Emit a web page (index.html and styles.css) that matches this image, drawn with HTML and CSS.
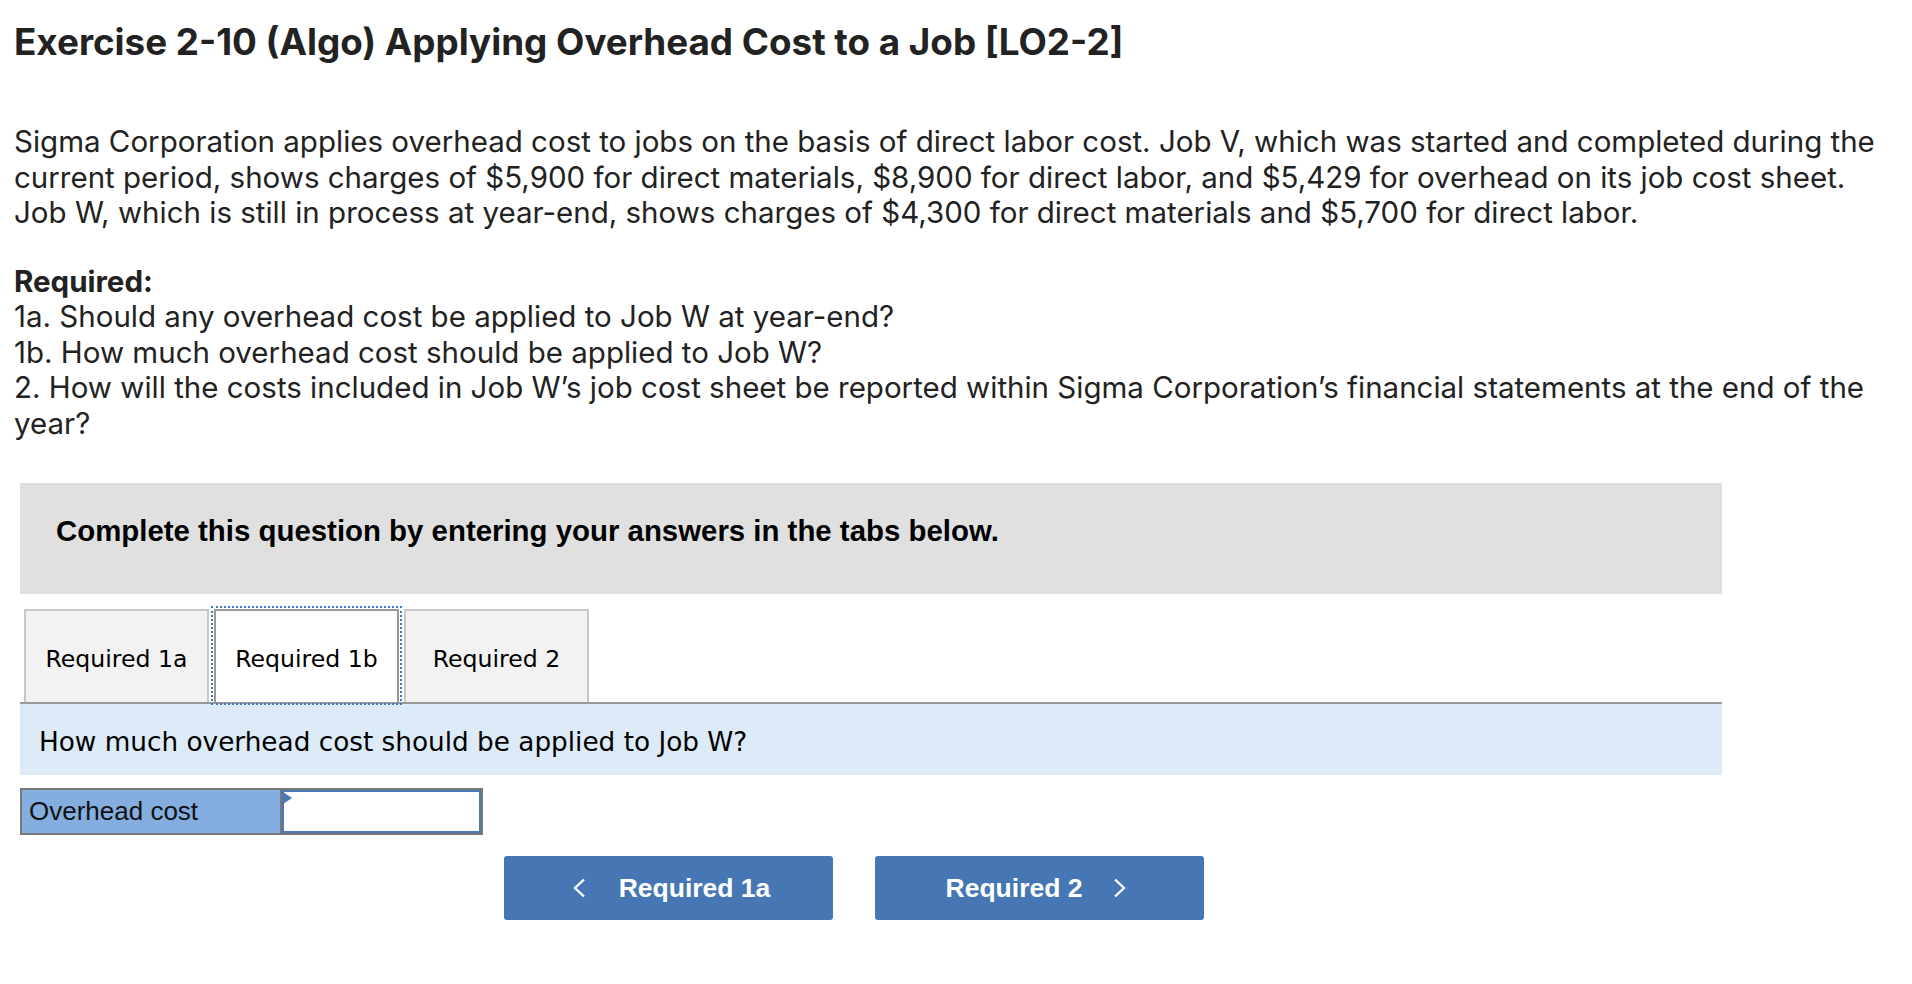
FILE: index.html
```html
<!DOCTYPE html>
<html>
<head>
<meta charset="utf-8">
<link rel="stylesheet" href="styles.css">
</head>
<body>
<div class="intro">
  <h1 class="title">Exercise 2-10 (Algo) Applying Overhead Cost to a Job [LO2-2]</h1>
  <p class="para">Sigma Corporation applies overhead cost to jobs on the basis of direct labor cost. Job V, which was started and completed during the<br>current period, shows charges of $5,900 for direct materials, $8,900 for direct labor, and $5,429 for overhead on its job cost sheet.<br>Job W, which is still in process at year-end, shows charges of $4,300 for direct materials and $5,700 for direct labor.</p>
  <div class="required">
    <div class="req-head">Required:</div>
    <div>1a. Should any overhead cost be applied to Job W at year-end?</div>
    <div>1b. How much overhead cost should be applied to Job W?</div>
    <div>2. How will the costs included in Job W’s job cost sheet be reported within Sigma Corporation’s financial statements at the end of the<br>year?</div>
  </div>
</div>
<div class="quiz">
  <div class="banner">Complete this question by entering your answers in the tabs below.</div>
  <div class="tabs">
    <div class="tab">Required 1a</div>
    <div class="tab active">Required 1b</div>
    <div class="tab">Required 2</div>
  </div>
  <div class="prompt">How much overhead cost should be applied to Job W?</div>
  <div class="answer">
    <div class="answer-label">Overhead cost</div>
    <div class="answer-input"><span class="marker"></span></div>
  </div>
  <div class="nav">
    <button class="nav-btn prev"><svg class="chev" viewBox="0 0 14 20" width="14" height="20"><polyline points="12,1.5 3,10 12,18.5" fill="none" stroke="#fff" stroke-width="2.4"/></svg><span>Required 1a</span></button>
    <button class="nav-btn next"><span>Required 2</span><svg class="chev" viewBox="0 0 14 20" width="14" height="20"><polyline points="2,1.5 11,10 2,18.5" fill="none" stroke="#fff" stroke-width="2.4"/></svg></button>
  </div>
</div>
</body>
</html>
```
FILE: styles.css
```css
* { box-sizing: border-box; }
body {
  margin: 0;
  background: #fff;
  color: #222;
  font-family: "Inter", "Liberation Sans", sans-serif;
}
.intro { padding-left: 14px; }
.title {
  margin: 21px 0 0;
  font-size: 36.8px;
  line-height: 42px;
  font-weight: 700;
  white-space: nowrap;
}
.para {
  margin: 61px 0 0;
  font-size: 29.5px;
  line-height: 35.5px;
  white-space: nowrap;
}
.required {
  margin-top: 33px;
  font-size: 29.5px;
  line-height: 35.5px;
  white-space: nowrap;
}
.req-head { font-weight: 700; }
.quiz {
  margin: 42px 0 0 20px;
  width: 1702px;
}
.banner {
  background: #e0e0e0;
  height: 111px;
  padding: 32px 36px 0;
  font-family: "Liberation Sans", Arial, sans-serif;
  font-weight: 700;
  font-size: 29.4px;
  line-height: 32px;
  color: #000;
}
.tabs {
  display: flex;
  margin-top: 15px;
  padding-left: 4px;
  border-bottom: 2px solid #999;
}
.tab {
  width: 185px;
  height: 93px;
  margin-right: 5px;
  display: flex;
  align-items: center;
  justify-content: center;
  padding-top: 4px;
  background: #f2f2f2;
  border: 2px solid #c8c8c8;
  border-bottom: 0;
  font-family: "DejaVu Sans", Verdana, sans-serif;
  font-size: 23.6px;
  color: #000;
}
.tab.active {
  background: #fff;
  border-color: #999;
  outline: 2px dotted #3f78c8;
  outline-offset: 1px;
}
.prompt {
  background: #ddeaf7;
  height: 71px;
  padding: 25px 0 0 19px;
  font-family: "DejaVu Sans", Verdana, sans-serif;
  font-size: 26.3px;
  line-height: 27px;
  color: #000;
}
.answer {
  display: flex;
  width: 463px;
  height: 47px;
  margin-top: 13px;
  border: 2px solid #777;
}
.answer-label {
  width: 260px;
  background: #84ade0;
  border-right: 2px solid #777;
  padding: 6px 0 0 7px;
  font-family: "Liberation Sans", Arial, sans-serif;
  font-size: 26px;
  line-height: 30px;
  color: #111;
}
.answer-input {
  flex: 1;
  position: relative;
  background: #fff;
  border: 2px solid #4a78b5;
}
.marker {
  position: absolute;
  left: -1px;
  top: 0;
  width: 0;
  height: 0;
  border-top: 6px solid transparent;
  border-bottom: 6px solid transparent;
  border-left: 9px solid #4a78b5;
}
.nav {
  display: flex;
  justify-content: center;
  gap: 42px;
  margin-top: 21px;
  padding-right: 35px;
}
.nav-btn {
  width: 329px;
  height: 64px;
  border: 0;
  border-radius: 3px;
  background: #4677b4;
  color: #fff;
  display: flex;
  align-items: center;
  justify-content: center;
  gap: 30px;
  font-family: "Liberation Sans", Arial, sans-serif;
  font-weight: 700;
  font-size: 26.5px;
  padding: 0;
}
.nav-btn.prev { gap: 33px; padding-left: 6px; }
.nav-btn.next { gap: 31px; padding-right: 5px; }
.chev { display: block; }
```
